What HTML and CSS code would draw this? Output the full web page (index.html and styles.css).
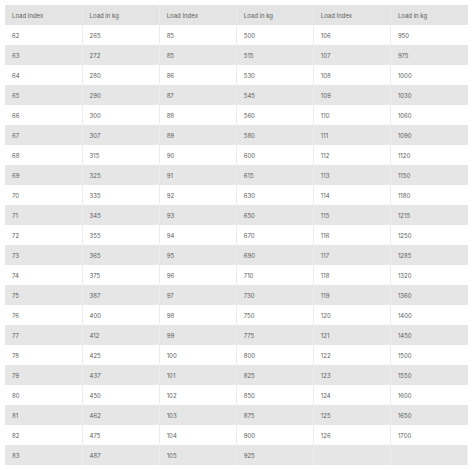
FILE: index.html
```html
<!DOCTYPE html>
<html>
<head>
<meta charset="utf-8">
<link rel="stylesheet" href="styles.css">
</head>
<body>
<table class="load-table">
<thead>
<tr><th>Load Index</th><th>Load in kg</th><th>Load Index</th><th>Load in kg</th><th>Load Index</th><th>Load in kg</th></tr>
</thead>
<tbody>
<tr><td>62</td><td>265</td><td>85</td><td>500</td><td>106</td><td>950</td></tr>
<tr><td>63</td><td>272</td><td>85</td><td>515</td><td>107</td><td>975</td></tr>
<tr><td>64</td><td>280</td><td>86</td><td>530</td><td>108</td><td>1000</td></tr>
<tr><td>65</td><td>290</td><td>87</td><td>545</td><td>109</td><td>1030</td></tr>
<tr><td>66</td><td>300</td><td>88</td><td>560</td><td>110</td><td>1060</td></tr>
<tr><td>67</td><td>307</td><td>89</td><td>580</td><td>111</td><td>1090</td></tr>
<tr><td>68</td><td>315</td><td>90</td><td>600</td><td>112</td><td>1120</td></tr>
<tr><td>69</td><td>325</td><td>91</td><td>615</td><td>113</td><td>1150</td></tr>
<tr><td>70</td><td>335</td><td>92</td><td>630</td><td>114</td><td>1180</td></tr>
<tr><td>71</td><td>345</td><td>93</td><td>650</td><td>115</td><td>1215</td></tr>
<tr><td>72</td><td>355</td><td>94</td><td>670</td><td>116</td><td>1250</td></tr>
<tr><td>73</td><td>365</td><td>95</td><td>690</td><td>117</td><td>1285</td></tr>
<tr><td>74</td><td>375</td><td>96</td><td>710</td><td>118</td><td>1320</td></tr>
<tr><td>75</td><td>387</td><td>97</td><td>730</td><td>119</td><td>1360</td></tr>
<tr><td>76</td><td>400</td><td>98</td><td>750</td><td>120</td><td>1400</td></tr>
<tr><td>77</td><td>412</td><td>99</td><td>775</td><td>121</td><td>1450</td></tr>
<tr><td>78</td><td>425</td><td>100</td><td>800</td><td>122</td><td>1500</td></tr>
<tr><td>79</td><td>437</td><td>101</td><td>825</td><td>123</td><td>1550</td></tr>
<tr><td>80</td><td>450</td><td>102</td><td>850</td><td>124</td><td>1600</td></tr>
<tr><td>81</td><td>462</td><td>103</td><td>875</td><td>125</td><td>1650</td></tr>
<tr><td>82</td><td>475</td><td>104</td><td>900</td><td>126</td><td>1700</td></tr>
<tr><td>83</td><td>487</td><td>105</td><td>925</td><td></td><td></td></tr>
</tbody>
</table>
</body>
</html>
```

FILE: styles.css
```css
html, body {
  margin: 0;
  padding: 0;
  background: #ffffff;
}
body {
  padding: 5px 5px 0 5px;
  font-family: Inter, "Liberation Sans", sans-serif;
}
.load-table {
  width: 463px;
  border-collapse: collapse;
  table-layout: fixed;
  font-size: 6px;
  color: #5c5c5c;
}
.load-table th,
.load-table td {
  height: 20px;
  padding: 0 0 0 7px;
  box-sizing: border-box;
  text-align: left;
  font-weight: 400;
  vertical-align: middle;
  border-left: 1px solid #ececec;
  white-space: nowrap;
}
.load-table th:first-child,
.load-table td:first-child {
  border-left: none;
}
.load-table thead tr {
  background: #e4e4e4;
}
.load-table tbody tr:nth-child(even) {
  background: #e6e6e6;
}
.load-table tbody tr:nth-child(odd) {
  background: #ffffff;
}
.load-table tbody tr:last-child td:last-child {
  border-right: 1px solid #f4f4f4;
}
```
